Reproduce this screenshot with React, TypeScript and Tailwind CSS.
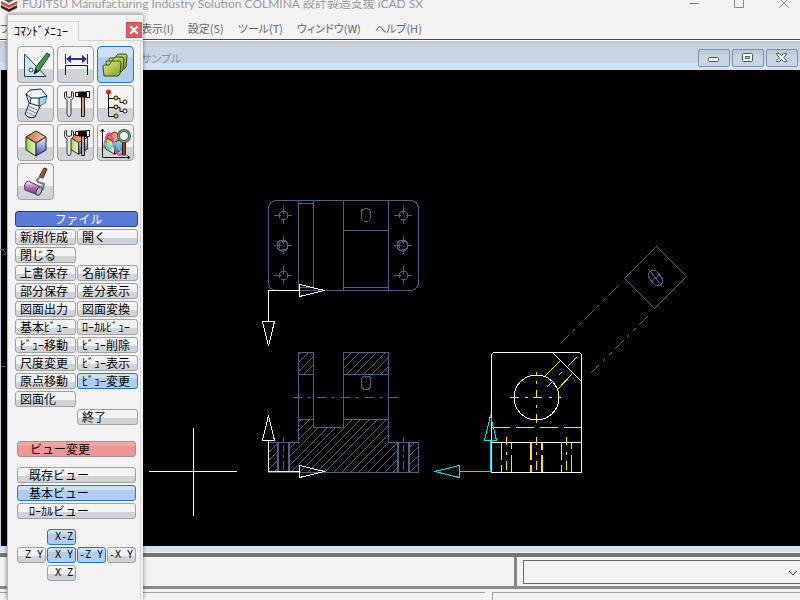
import React from "react";

const jp = "font-['Noto_Sans_CJK_JP',sans-serif]";

/* ---------- tool icons ---------- */

function Cube({ x = 0, y = 0, s = 1 }: { x?: number; y?: number; s?: number }) {
  return (
    <g transform={`translate(${x} ${y}) scale(${s})`} strokeLinejoin="round">
      <path d="M4 8 14 2 24 8 14 14Z" fill="url(#cubeTop)" stroke="#222" />
      <path d="M4 8 14 14V27L4 21Z" fill="url(#cubeLeft)" stroke="#222" />
      <path d="M24 8 14 14V27L24 21Z" fill="url(#cubeRight)" stroke="#222" />
    </g>
  );
}

function Wrench() {
  return (
    <path
      d="M5.500 5.500v5l2.500 3v13q0 3 2 3t2-3v-13l2.500-3v-5l-2-1v5l-2.500 1-2.500-1v-5Z"
      fill="#e3e6e8"
      stroke="#333"
    />
  );
}

function Hammer() {
  return (
    <g stroke="#111">
      <path d="M22.500 9.500h3v20h-3z" fill="#e09a72" />
      <path d="M19.500 5h9v5h-9z" fill="#111" />
      <path d="M27.500 4.500h3v6h-3z" fill="#f2f2f2" />
      <path d="M16.500 5.500h3v4h-3z" fill="#e6e6e6" />
    </g>
  );
}

function Folder({ x, y }: { x: number; y: number }) {
  return (
    <path
      transform={`translate(${x} ${y})`}
      d="M1 16 0 6Q0 5 2 5h4l2-3q1-1 3-1h5q2 0 2 2l-1 11-2 2Z"
      fill="url(#folder)"
      stroke="#3c4a12"
    />
  );
}

const icons: { name: string; art: React.ReactNode }[] = [
  {
    name: "作図",
    art: (
      <>
        <path d="M5.500 6v22.500H27Z" fill="#cfeaf4" stroke="#23415c" />
        <circle cx="12" cy="22" r="2" fill="#fff" stroke="#23415c" />
        <path d="M15 26 17 19 28 5l3 2-11 16Z" fill="#3f9350" stroke="#14421f" />
        <path d="m15 26 2-6 2 4Z" fill="#222" />
      </>
    ),
  },
  {
    name: "寸法",
    art: (
      <>
        <path d="M6.500 6v10M28.500 6v10" stroke="#20318c" />
        <path d="M9 11h17" stroke="#20318c" strokeWidth="2" />
        <path d="m7 11 5-4v8ZM28 11l-5-4v8Z" fill="#20318c" />
        <path d="m28 18-3 8h3Z" fill="#bfe6ea" />
        <path d="M6.500 27V17.500h22V27" fill="none" stroke="#111" />
      </>
    ),
  },
  {
    name: "ビュー",
    art: (
      <>
        <Folder x={10} y={5} />
        <Folder x={7} y={8} />
        <Folder x={4} y={12} />
      </>
    ),
  },
  {
    name: "部品",
    art: (
      <>
        <path d="m11 14-5 13q3 5 10 3l6-13Z" fill="#e6edf2" stroke="#222" />
        <path d="m9 19 9 4M8 22l9 4M7 25l9 4" stroke="#718391" />
        <path d="m7 7 4-4 11-1 6 7-2 7-6 3-10-3Z" fill="#e8f7fd" stroke="#222" />
        <path d="m20 11 8-2-2 7-6 3Z" fill="#8fd1ef" />
        <path d="m7 7 5 4 8 0 8-2M12 11l-1 5M20 11v8" fill="none" stroke="#222" />
      </>
    ),
  },
  { name: "編集", art: (<><Wrench /><Hammer /></>) },
  {
    name: "構成",
    art: (
      <>
        <path d="M9.500 5v24.500H16M9.500 11.500H16M9.500 20.500H16M18 11.500h3v4h3M18 20.500h3v4h3" fill="none" stroke="#111" />
        <circle cx="9.500" cy="5" r="2.500" fill="#e01b1b" />
        {[11, 20, 29].map((cy) => (
          <circle key={cy} cx="17" cy={cy} r="2" fill="#f3dc12" stroke="#111" />
        ))}
        <circle cx="26" cy="15" r="2" fill="#fff" stroke="#111" />
        <circle cx="26" cy="24" r="2" fill="#fff" stroke="#111" />
      </>
    ),
  },
  { name: "ソリッド", art: <Cube x={3} y={3} /> },
  { name: "ソリッド編集", art: (<><Cube x={7} y={4} s={0.9} /><Wrench /><Hammer /></>) },
  {
    name: "解析",
    art: (
      <>
        <Cube x={3} y={4} s={0.9} />
        <path d="M5 22Q9-4 14 16t10 9" fill="none" stroke="#ee3f9c" strokeWidth="2" />
        <path d="M6 17q3 9 7 3t6 0 6 8" fill="none" stroke="#2fe3ee" strokeWidth="2" />
        <path d="M3.500 31V3m-2 3 2-3 2 3M3.500 31.500H31m-3-2 3 2-3 2" fill="none" stroke="#111" />
        <path d="M23.500 16h3v13h-3z" fill="#8a4a1c" stroke="#3c1d08" />
        <circle cx="25" cy="10" r="5.500" fill="#e5f4f4" stroke="#38553b" strokeWidth="3" />
        <circle cx="25" cy="10" r="5.500" fill="none" stroke="#9fbe9f" />
      </>
    ),
  },
  {
    name: "塗装",
    art: (
      <>
        <path d="m20 12 5-9 3 1-4 9Z" fill="#a4533a" stroke="#5b2517" />
        <path d="m21 12-3 3 1 2 6 2-1 5-3 1" fill="none" stroke="#777" strokeWidth="2" />
        <path d="m9 16 13 6q2 5-3 8L6 25q-2-6 3-9Z" fill="url(#roller)" stroke="#444" />
        <ellipse cx="20" cy="26" rx="2.500" ry="4.500" transform="rotate(25 20 26)" fill="#bbb" stroke="#333" />
      </>
    ),
  },
];

function Gradients() {
  return (
    <svg className="absolute size-0" aria-hidden="true">
      <defs>
        <linearGradient id="cubeTop"><stop stopColor="#d96a35" /><stop offset="1" stopColor="#f7c9a8" /></linearGradient>
        <linearGradient id="cubeLeft"><stop stopColor="#9cc93f" /><stop offset="1" stopColor="#eef7cf" /></linearGradient>
        <linearGradient id="cubeRight" x2="0" y2="1"><stop stopColor="#eef3ff" /><stop offset="1" stopColor="#3154b4" /></linearGradient>
        <linearGradient id="folder" x2="1" y2="1"><stop stopColor="#e3e88a" /><stop offset="1" stopColor="#7fa31c" /></linearGradient>
        <linearGradient id="roller" x2="0" y2="1"><stop stopColor="#fff" /><stop offset=".5" stopColor="#b35fb0" /><stop offset="1" stopColor="#3b57a6" /></linearGradient>
      </defs>
    </svg>
  );
}

/* ---------- command palette ---------- */

const plain =
  "border-[#a0a0a0] bg-[linear-gradient(#f4f4f4_60%,#d0d4d7_60%)]";
const active =
  "border-[#1c74e0] bg-[linear-gradient(#cfe0f2_30%,#b0cdef_30%)]";

function Cmd({ label, on = false, wide = false, mono = false }: { label: string; on?: boolean; wide?: boolean; mono?: boolean }) {
  return (
    <button
      className={`block h-4 w-full overflow-hidden rounded-[3px] border text-left leading-[14px] whitespace-pre text-black ${
        mono ? "pl-px font-['DejaVu_Sans_Mono',monospace] text-[10px]" : "text-[12px]"
      } ${mono ? "" : wide ? "pl-[11px]" : "pl-1"} ${on ? active : plain}`}
    >
      {label}
    </button>
  );
}

const commands: (string | null)[] = [
  "新規作成", "開く",
  "閉じる", null,
  "上書保存", "名前保存",
  "部分保存", "差分表示",
  "図面出力", "図面変換",
  "基本ﾋﾞｭｰ", "ﾛｰｶﾙﾋﾞｭｰ",
  "ﾋﾞｭｰ移動", "ﾋﾞｭｰ削除",
  "尺度変更", "ﾋﾞｭｰ表示",
  "原点移動", "ﾋﾞｭｰ変更",
  "図面化", null,
  null, "終了",
];

const directions: { label: string; on: boolean }[] = [
  { label: " Z Y", on: false },
  { label: " X Y", on: true },
  { label: "-Z Y", on: true },
  { label: "-X Y", on: false },
];

function Palette() {
  return (
    <aside className="absolute top-3.5 bottom-0 left-[7px] w-[136px] border-t border-l border-[#bdbdbd] bg-[#f3f3f3] shadow-[0_0_4px_#0008]">
      <Gradients />
      <div className="flex h-[26px] items-end">
        <div className="h-5 w-[71px] border-t border-r border-[#d4d4d4] pl-1.5 text-[12px] leading-[18px] whitespace-nowrap text-black">
          ｺﾏﾝﾄﾞﾒﾆｭｰ
        </div>
        <div className="flex h-full flex-1 justify-end border-b border-[#d4d4d4] pt-[7px] pr-px">
          <button aria-label="閉じる" className="flex size-4 items-center justify-center border border-[#c9504f] bg-[#d9615f]">
            <svg width="8" height="8" viewBox="0 0 8 8" stroke="#fff" strokeWidth="2"><path d="m0 0 8 8M8 0 0 8" /></svg>
          </button>
        </div>
      </div>
      <div className="mr-0.5 h-full border-r border-[#d4d4d4] pt-[5px]">
        <div className="ml-[9px] grid w-[117px] grid-cols-3 gap-x-[3px] gap-y-0.5">
          {icons.map(({ name, art }, i) => (
            <button
              key={name}
              aria-label={name}
              className={`flex h-[37px] items-center justify-center rounded-[4px] border ${
                i === 2 ? "border-[#1c74e0] bg-[linear-gradient(#cfe0f2_30%,#b0cdef_30%)]" : "border-[#a0a0a0] bg-[linear-gradient(#f4f4f4_62%,#d0d4d7_62%)]"
              }`}
            >
              <svg width="33" height="33" viewBox="0 0 33 33">{art}</svg>
            </button>
          ))}
        </div>
        <div className="mt-[11px] ml-[7px] w-[123px]">
          <h2 className="h-4 rounded-[3px] border border-[#2c4274] bg-[#5b7bd9] pl-1 text-center text-[12px] leading-[14px] font-normal text-white">ファイル</h2>
          <div className="mt-0.5 grid grid-cols-2 gap-x-px gap-y-0.5">
            {commands.map((c, i) => (c ? <Cmd key={i} label={c} on={c === "ﾋﾞｭｰ変更"} /> : <span key={i} />))}
          </div>
        </div>
        <div className="mt-4 ml-[9px] w-[119px]">
          <h2 className="h-4 rounded-[3px] border border-[#a0908f] bg-[linear-gradient(#f5a3a4_30%,#ec9696_30%)] pl-3 text-[12px] leading-[14px] font-normal text-black">ビュー変更</h2>
          <div className="mt-2.5 flex flex-col gap-0.5">
            <Cmd wide label="既存ビュー" />
            <Cmd wide label="基本ビュー" on />
            <Cmd wide label="ﾛｰｶﾙビュー" />
          </div>
          <div className="mt-2.5 grid grid-cols-4 gap-x-px gap-y-0.5">
            <div className="col-start-2"><Cmd mono on label=" X-Z" /></div>
            <div className="col-span-2" />
            {directions.map((d) => (
              <Cmd key={d.label} mono label={d.label} on={d.on} />
            ))}
            <div className="col-start-2"><Cmd mono label=" X Z" /></div>
          </div>
        </div>
      </div>
    </aside>
  );
}

/* ---------- drawing ---------- */

const slate = "#4a6285";
const yellow = "#ffe600";
const hatch = Array.from({ length: 36 }, (_, i) => 610 + Math.round(i * 8.5));

function Hole({ x, y, double = false }: { x: number; y: number; double?: boolean }) {
  return (
    <g>
      <circle cx={x} cy={y} r="4.500" />
      {double && <circle cx={x - 1} cy={y} r="5.500" />}
      <path d={`M${x - 10} ${y}h7M${x + 4} ${y}h4M${x} ${y - 10}v8M${x} ${y + 4}v4`} />
    </g>
  );
}

function Drawing() {
  return (
    <svg className="block size-full" viewBox="0 70 800 476" preserveAspectRatio="xMinYMin slice" fill="none" shapeRendering="crispEdges">
      <defs>
        <clipPath id="section">
          <path d="M298 352h15v22h-15zM343 352h45v22h-45zM268 442h9v30h-9zM410 442h8v30h-8zM290 442h8v-23h15v8h30v-8h45v23h9v30H290z" />
        </clipPath>
      </defs>

      <path d="M.5 70v476" stroke="#c8d5e3" />

      <g stroke={slate}>
        <rect x="268.500" y="200.500" width="150" height="90" rx="8" />
        <path d="M298.500 200v90M313.500 200v90M343.500 200v90M388.500 200v90M298 203.500h15M298 287.500h15M343 287.500h45M343 230.500h45" />
        <rect x="361.500" y="208.500" width="9" height="13" rx="4" />
        {[283.5, 403.5].map((x) => (
          <React.Fragment key={x}>
            <Hole x={x} y={215.5} />
            <Hole x={x} y={245.5} double />
            <Hole x={x} y={275.5} />
          </React.Fragment>
        ))}

        <path d="M268.500 472.500v-30h30v-90h15v75h30v-75h45v90h30v30zM298 374.500h15M343 374.500h45M298 419.500h15M343 419.500h45" />
        <path d="M278 442v30M289 442v30M398 442v30M409 442v30" strokeWidth="2" />
        <path d="M283.500 437v5M283.500 445v7M283.500 455v3M283.500 461v9M403.500 437v5M403.500 445v7M403.500 455v3M403.500 461v9" />
        <path d="M293 397.500h105" strokeDasharray="9 6 3 6" />
        <path d="M363.500 376.500h6l1 2v8q-1 3-4 3h-1q-3 0-4-3v-8z" />
        <g clipPath="url(#section)">
          {hatch.map((c) => (
            <path key={c} d={`M${c - 480} 480 ${c - 340} 340`} />
          ))}
        </g>

        <path d="m656.500 246.500 30 30-32 32-30-30z" />
        <g transform="rotate(52 655.500 278)">
          <rect x="647" y="273" width="17" height="10" rx="5" />
          <path d="M644 278h17M655.500 272v12" />
        </g>
        <path d="m561 343 57-57M591 373l57-57" strokeDasharray="12 5 3 6 3 5" />
        <path d="M0 249.500h3l3 4M3 254.500h3M1 366.500h5" />
      </g>

      <g stroke="#fff">
        <path d="M491.500 472.500v-117q0-3 3-3h84q3 0 3 3v117zM491 442.500h90M552 352l29 29" />
        <circle cx="536.500" cy="397.500" r="22.500" />
        <path d="M268.500 346 262.500 321.500h12zM268.500 321v-30.500H299M299.500 284.500v12l25-6z" />
        <path d="M268.500 415.500 262.500 440.500h12zM268.500 440v31.500H299M299.500 465.500v12l25-6z" />
        <path d="M149 471.500h88M193.500 428v88" />
      </g>

      <g stroke={yellow}>
        <path d="M492 427.500h89" strokeDasharray="18 6" />
        <path d="M510 397.500h9M525 397.500h3M533 397.500h9M549 397.500h3M558 397.500h3M536.500 372v4M536.500 381v3M536.500 390v8M536.500 405v3M536.500 414v9" />
        <path d="m545 376 15-15M557 390l15-16M547 387l6-6M559 375l3-3M568 366l9-9" />
        <path d="M501.500 443v17M501.500 465v7M561.500 443v17M561.500 465v7M511.500 443v6M511.500 455v17M571.500 443v6M571.500 455v17" />
        <path d="M531 443v17M531 465v7M542 443v7M542 455v17" strokeWidth="2" />
        {[506.5, 536.5, 566.5].map((x) => (
          <path key={x} d={`M${x} 437v8M${x} 452v3M${x} 461v9`} />
        ))}
      </g>

      <path d="M490.500 415.500 484.500 440.500h12zM490.500 440v31.500H460M459.500 465.500v12l-25-6z" stroke="#00e8f0" />
    </svg>
  );
}

/* ---------- window frame ---------- */

const menus = ["設定(S)", "ツール(T)", "ウィンドウ(W)", "ヘルプ(H)"];

const mdiIcons: { name: string; art: React.ReactNode }[] = [
  { name: "最小化", art: <rect x="1.500" y="6.500" width="10" height="4" rx="1" fill="#fff" /> },
  { name: "元に戻す", art: (<><rect x="1.500" y="2.500" width="10" height="8" rx="1" fill="#fff" /><path d="M4.500 5.500h4v2h-4z" fill="#c9d6e4" /></>) },
  { name: "閉じる", art: <path d="M1.500 2.500h3l2 2 2-2h3v1l-3 3 3 3v1h-3l-2-2-2 2h-3v-1l3-3-3-3z" fill="#fff" /> },
];

export default function App() {
  return (
    <div className={`relative flex h-screen flex-col overflow-hidden bg-[#f3f3f3] text-[#666] ${jp}`}>
      <header className="flex h-4 shrink-0 items-start justify-between pr-2.5">
        <div className="flex items-start gap-1">
          <svg width="18" height="12" viewBox="0 0 18 12">
            <path d="M1 5 9 9l8-4v3l-8 4-8-4Z" fill="#3a2020" />
            <path d="M1 1 9 5l8-4v3L9 8 1 4Z" fill="#d8472f" />
            <path d="M4 0h10L9 3Z" fill="#555" />
          </svg>
          <h1 className="font-['Lato','Noto_Sans_CJK_JP',sans-serif] text-[12px] leading-2 font-normal whitespace-nowrap text-[#999]">
            FUJITSU Manufacturing Industry Solution COLMINA 設計製造支援 iCAD SX
          </h1>
        </div>
        <div className="flex gap-[33px]">
          <button aria-label="最小化"><svg width="12" height="10" viewBox="0 0 12 10" stroke="#888"><path d="M1 3.500h10" /></svg></button>
          <button aria-label="最大化"><svg width="12" height="10" viewBox="0 0 12 10" fill="none" stroke="#888"><path d="M1.500-2.500h9v10h-9z" /></svg></button>
          <button aria-label="閉じる"><svg width="12" height="10" viewBox="0 0 12 10" stroke="#888"><path d="m1-2 10 10M11-2 1 8" /></svg></button>
        </div>
      </header>

      <nav className="flex h-[23px] shrink-0 items-center text-[11px] leading-4 whitespace-nowrap [font-feature-settings:'palt']">
        <button aria-label="ファイル(F)" className="mr-[134px] w-[7px] text-left">フ</button>
        <div className="flex gap-3.5">
          <button>表示(I)</button>
          {menus.map((m) => (<button key={m}>{m}</button>))}
        </div>
      </nav>

      <div className="flex h-[31px] shrink-0 items-center justify-between border-t border-[#4a4a44] bg-[linear-gradient(#fff_1px,#bccbda_1px,#bccbda_3px,#cfd0d4_3px,#cfd0d4_8px,#c8d5e3_8px,#c8d5e3_23px,#d3e2f2_23px)] pt-1.5 pr-0.5 pl-[141px]">
        <span className="text-[11px] leading-4 text-[#8b949e] [font-feature-settings:'palt']">サンプル</span>
        <div className="flex gap-0.5">
          {mdiIcons.map(({ name, art }) => (
            <button key={name} aria-label={name} className="flex h-[18px] w-8 items-center justify-center rounded-[2px] border border-[#8090b0] bg-[linear-gradient(#bccbda_4px,#cfd0d4_4px,#cfd0d4_6px,#c8d5e3_6px)]">
              <svg width="14" height="14" viewBox="0 0 14 14" stroke="#4a5568">{art}</svg>
            </button>
          ))}
        </div>
      </div>

      <main className="min-h-0 flex-1 border-b-[6px] border-[#d3e2f0] bg-black"><Drawing /></main>

      <section className="mt-px flex h-9 shrink-0 border-t-4 border-b-3 border-t-[#767272] border-b-[#888]">
        <div className="w-[517px] border-r-3 border-[#858585]" />
        <div className="relative my-[3px] ml-1.5 flex-1">
          <select aria-label="入力履歴" className="block h-6 w-full appearance-none border border-r-0 border-[#666] bg-[#f3f3f3] px-1 text-[12px]">
            <option></option>
          </select>
          <svg className="pointer-events-none absolute top-2.5 right-0.5" width="10" height="6" viewBox="0 0 10 6" fill="none" stroke="#444"><path d="m1 1 4 4 4-4" /></svg>
        </div>
      </section>

      <footer className="flex h-[11px] shrink-0 gap-[7px] pt-[3px]">
        <div className="w-[485px] border-t border-[#a0a0a0]" />
        <div className="flex-1 border-t border-l border-[#a0a0a0]" />
      </footer>

      <Palette />
    </div>
  );
}
